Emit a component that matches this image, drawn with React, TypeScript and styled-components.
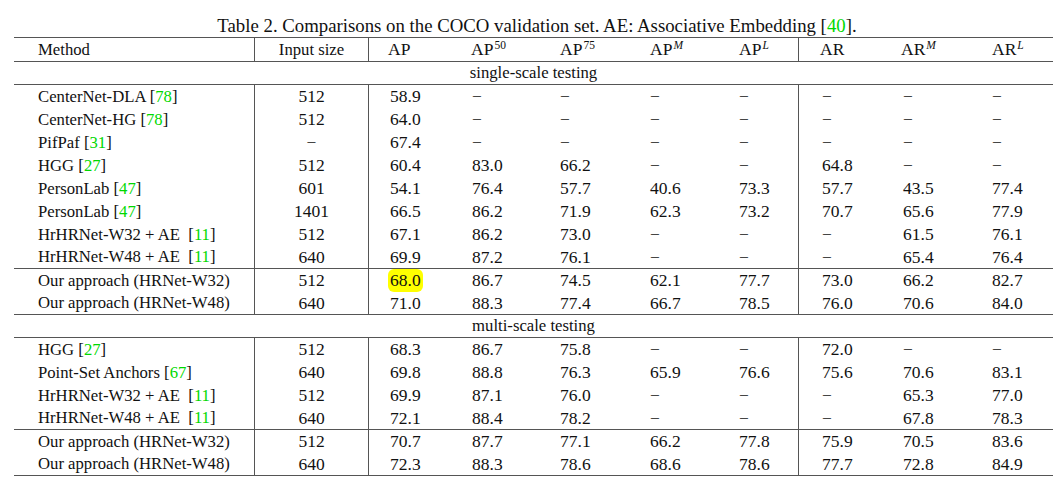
import React from "react";
import styled, { createGlobalStyle } from "styled-components";

const SERIF = `"Liberation Serif", "DejaVu Serif", serif`;

const GlobalStyle = createGlobalStyle`
  html, body {
    margin: 0;
    padding: 0;
    background: #ffffff;
  }
  body {
    font-family: ${SERIF};
    color: #111;
  }
`;

const COLS = "241px 114px 102px 89px 90px 89px 60px 102px 91px 61px";
const LINE = "#555";

const Page = styled.div`
  width: 1060px;
  padding: 15px 0 0 14px;
  box-sizing: border-box;
  font-family: ${SERIF};
`;

const Caption = styled.div`
  width: 1046px;
  height: 22px;
  line-height: 22px;
  font-size: 18.8px;
  text-align: center;
  white-space: nowrap;
`;

const Table = styled.div`
  width: 1039px;
  border-top: 1px solid ${LINE};
`;

const Row = styled.div<{ $h?: number; $rule?: boolean }>`
  display: grid;
  grid-template-columns: ${COLS};
  height: ${(p) => p.$h ?? 23}px;
  box-sizing: border-box;
  border-bottom: ${(p) => (p.$rule ? `1px solid ${LINE}` : "none")};
`;

const SectionRow = styled.div`
  height: 23px;
  box-sizing: border-box;
  border-bottom: 1px solid ${LINE};
  text-align: center;
  font-size: 16.7px;
  line-height: 22px;
`;

const Cell = styled.div<{ $align?: "left" | "center"; $pad?: number; $divider?: boolean; $num?: boolean }>`
  box-sizing: border-box;
  display: flex;
  align-items: center;
  justify-content: ${(p) => (p.$align === "center" ? "center" : "flex-start")};
  padding-left: ${(p) => p.$pad ?? 0}px;
  border-right: ${(p) => (p.$divider ? `1px solid ${LINE}` : "none")};
  font-size: ${(p) => (p.$num ? "17.5px" : "16.7px")};
  white-space: pre;
`;

const Cite = styled.span`
  color: #00d800;
`;

const Sup = styled.span<{ $italic?: boolean }>`
  font-size: 11.5px;
  position: relative;
  top: -5px;
  margin-left: 1px;
  font-style: ${(p) => (p.$italic ? "italic" : "normal")};
`;

const Mark = styled.span`
  background: #ffff00;
  border-radius: 6px;
  padding: 1px 2px;
  margin-left: -2px;
`;

type Data = {
  name: string;
  cite?: string;
  size: string;
  vals: string[];
  mark?: number;
};

const D = "−";
const NUM_PAD = [21, 1, 0, 0, 0, 23, 2, 0];
const DIVIDER_AT = 4;

const single: Data[] = [
  { name: "CenterNet-DLA ", cite: "78", size: "512", vals: ["58.9", D, D, D, D, D, D, D] },
  { name: "CenterNet-HG ", cite: "78", size: "512", vals: ["64.0", D, D, D, D, D, D, D] },
  { name: "PifPaf ", cite: "31", size: D, vals: ["67.4", D, D, D, D, D, D, D] },
  { name: "HGG ", cite: "27", size: "512", vals: ["60.4", "83.0", "66.2", D, D, "64.8", D, D] },
  { name: "PersonLab ", cite: "47", size: "601", vals: ["54.1", "76.4", "57.7", "40.6", "73.3", "57.7", "43.5", "77.4"] },
  { name: "PersonLab ", cite: "47", size: "1401", vals: ["66.5", "86.2", "71.9", "62.3", "73.2", "70.7", "65.6", "77.9"] },
  { name: "HrHRNet-W32 + AE  ", cite: "11", size: "512", vals: ["67.1", "86.2", "73.0", D, D, D, "61.5", "76.1"] },
  { name: "HrHRNet-W48 + AE  ", cite: "11", size: "640", vals: ["69.9", "87.2", "76.1", D, D, D, "65.4", "76.4"] },
];

const singleOurs: Data[] = [
  { name: "Our approach (HRNet-W32)", size: "512", vals: ["68.0", "86.7", "74.5", "62.1", "77.7", "73.0", "66.2", "82.7"], mark: 0 },
  { name: "Our approach (HRNet-W48)", size: "640", vals: ["71.0", "88.3", "77.4", "66.7", "78.5", "76.0", "70.6", "84.0"] },
];

const multi: Data[] = [
  { name: "HGG ", cite: "27", size: "512", vals: ["68.3", "86.7", "75.8", D, D, "72.0", D, D] },
  { name: "Point-Set Anchors ", cite: "67", size: "640", vals: ["69.8", "88.8", "76.3", "65.9", "76.6", "75.6", "70.6", "83.1"] },
  { name: "HrHRNet-W32 + AE  ", cite: "11", size: "512", vals: ["69.9", "87.1", "76.0", D, D, D, "65.3", "77.0"] },
  { name: "HrHRNet-W48 + AE  ", cite: "11", size: "640", vals: ["72.1", "88.4", "78.2", D, D, D, "67.8", "78.3"] },
];

const multiOurs: Data[] = [
  { name: "Our approach (HRNet-W32)", size: "512", vals: ["70.7", "87.7", "77.1", "66.2", "77.8", "75.9", "70.5", "83.6"] },
  { name: "Our approach (HRNet-W48)", size: "640", vals: ["72.3", "88.3", "78.6", "68.6", "78.6", "77.7", "72.8", "84.9"] },
];

const headers: { base: string; sup?: string; italic?: boolean }[] = [
  { base: "AP" },
  { base: "AP", sup: "50" },
  { base: "AP", sup: "75" },
  { base: "AP", sup: "M", italic: true },
  { base: "AP", sup: "L", italic: true },
  { base: "AR" },
  { base: "AR", sup: "M", italic: true },
  { base: "AR", sup: "L", italic: true },
];

function DataRow({ row, rule }: { row: Data; rule?: boolean }) {
  return (
    <Row $rule={rule}>
      <Cell $pad={24} $divider>
        {row.name}
        {row.cite && (
          <>
            [<Cite>{row.cite}</Cite>]
          </>
        )}
      </Cell>
      <Cell $align="center" $divider $num>
        {row.size}
      </Cell>
      {row.vals.map((v, i) => (
        <Cell key={i} $pad={NUM_PAD[i]} $divider={i === DIVIDER_AT} $num>
          {row.mark === i ? <Mark>{v}</Mark> : v}
        </Cell>
      ))}
    </Row>
  );
}

function Group({ rows }: { rows: Data[] }) {
  return (
    <>
      {rows.map((r, i) => (
        <DataRow key={i} row={r} rule={i === rows.length - 1} />
      ))}
    </>
  );
}

export default function App() {
  return (
    <Page>
      <GlobalStyle />
      <Caption>
        Table 2. Comparisons on the COCO validation set. AE: Associative Embedding [<Cite>40</Cite>].
      </Caption>
      <Table>
        <Row $h={24} $rule>
          <Cell $pad={24} $divider>
            Method
          </Cell>
          <Cell $align="center" $divider>
            Input size
          </Cell>
          {headers.map((h, i) => (
            <Cell key={i} $pad={NUM_PAD[i] - 2} $divider={i === DIVIDER_AT} $num>
              {h.base}
              {h.sup && <Sup $italic={h.italic}>{h.sup}</Sup>}
            </Cell>
          ))}
        </Row>
        <SectionRow>single-scale testing</SectionRow>
        <Group rows={single} />
        <Group rows={singleOurs} />
        <SectionRow>multi-scale testing</SectionRow>
        <Group rows={multi} />
        <Group rows={multiOurs} />
      </Table>
    </Page>
  );
}
